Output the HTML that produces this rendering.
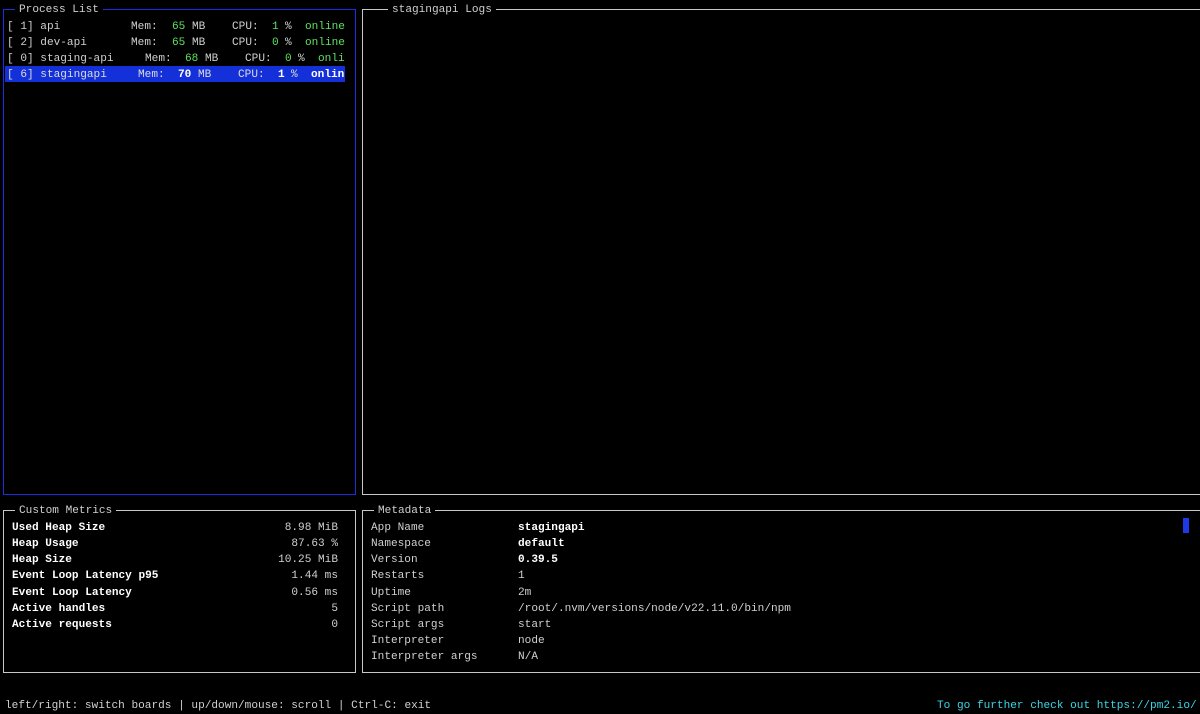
<!DOCTYPE html>
<html><head><meta charset="utf-8"><style>
html,body{margin:0;padding:0;background:#000;width:1200px;height:714px;overflow:hidden;position:relative;font-family:"Liberation Mono",monospace;font-size:11.1px;color:#d0d0d0}
.t{position:absolute;white-space:pre;line-height:16px;height:16px;margin-top:2px}
.box{position:absolute;border:1px solid #c8c8c8;box-sizing:border-box}
.blue{border-color:#1c2fe0}
.ttl{position:absolute;background:#000;padding:0 4px;line-height:14px;color:#d0d0d0;white-space:pre;margin-top:2px}
.g{color:#5fe05f}.w{color:#fff;font-weight:bold}.c{color:#3ad6e6}
.r{text-align:right}
</style></head><body>
<div class="box blue" style="left:3px;top:9px;width:353px;height:486px"></div>
<div class="ttl" style="left:15px;top:1px">Process List</div>
<div class="box" style="left:362px;top:9px;width:840px;height:486px"></div>
<div class="ttl" style="left:388px;top:1px">stagingapi Logs</div>
<div class="box" style="left:3px;top:510px;width:353px;height:163px"></div>
<div class="ttl" style="left:15px;top:502px">Custom Metrics</div>
<div class="box" style="left:362px;top:510px;width:840px;height:163px"></div>
<div class="ttl" style="left:374px;top:502px">Metadata</div>

<div style="position:absolute;left:5px;top:66px;width:340px;height:16px;background:#1430d8"></div>

<div class="t" style="left:7px;top:17px">[ 1] api</div>
<div class="t" style="left:131px;top:17px">Mem:</div><div class="t g" style="left:172px;top:17px">65</div><div class="t" style="left:192px;top:17px">MB</div>
<div class="t" style="left:232px;top:17px">CPU:</div><div class="t g" style="left:272px;top:17px">1</div><div class="t" style="left:285px;top:17px">%</div><div class="t g" style="left:305px;top:17px">online</div>

<div class="t" style="left:7px;top:33px">[ 2] dev-api</div>
<div class="t" style="left:131px;top:33px">Mem:</div><div class="t g" style="left:172px;top:33px">65</div><div class="t" style="left:192px;top:33px">MB</div>
<div class="t" style="left:232px;top:33px">CPU:</div><div class="t g" style="left:272px;top:33px">0</div><div class="t" style="left:285px;top:33px">%</div><div class="t g" style="left:305px;top:33px">online</div>

<div class="t" style="left:7px;top:49px">[ 0] staging-api</div>
<div class="t" style="left:145px;top:49px">Mem:</div><div class="t g" style="left:185px;top:49px">68</div><div class="t" style="left:205px;top:49px">MB</div>
<div class="t" style="left:245px;top:49px">CPU:</div><div class="t g" style="left:285px;top:49px">0</div><div class="t" style="left:298px;top:49px">%</div><div class="t g" style="left:318px;top:49px">onli</div>

<div class="t" style="left:7px;top:65px;color:#ddd">[ 6] stagingapi</div>
<div class="t" style="left:138px;top:65px;color:#ddd">Mem:</div><div class="t w" style="left:178px;top:65px">70</div><div class="t" style="left:198px;top:65px;color:#ddd">MB</div>
<div class="t" style="left:238px;top:65px;color:#ddd">CPU:</div><div class="t w" style="left:278px;top:65px">1</div><div class="t" style="left:291px;top:65px;color:#ddd">%</div><div class="t w" style="left:311px;top:65px">onlin</div>

<div class="t w" style="left:12px;top:518px">Used Heap Size</div><div class="t r" style="left:200px;width:138px;top:518px">8.98 MiB</div>
<div class="t w" style="left:12px;top:534px">Heap Usage</div><div class="t r" style="left:200px;width:138px;top:534px">87.63 %</div>
<div class="t w" style="left:12px;top:550px">Heap Size</div><div class="t r" style="left:200px;width:138px;top:550px">10.25 MiB</div>
<div class="t w" style="left:12px;top:566px">Event Loop Latency p95</div><div class="t r" style="left:200px;width:138px;top:566px">1.44 ms</div>
<div class="t w" style="left:12px;top:583px">Event Loop Latency</div><div class="t r" style="left:200px;width:138px;top:583px">0.56 ms</div>
<div class="t w" style="left:12px;top:599px">Active handles</div><div class="t r" style="left:200px;width:138px;top:599px">5</div>
<div class="t w" style="left:12px;top:615px">Active requests</div><div class="t r" style="left:200px;width:138px;top:615px">0</div>

<div class="t" style="left:371px;top:518px">App Name</div><div class="t w" style="left:518px;top:518px">stagingapi</div>
<div class="t" style="left:371px;top:534px">Namespace</div><div class="t w" style="left:518px;top:534px">default</div>
<div class="t" style="left:371px;top:550px">Version</div><div class="t w" style="left:518px;top:550px">0.39.5</div>
<div class="t" style="left:371px;top:566px">Restarts</div><div class="t" style="left:518px;top:566px">1</div>
<div class="t" style="left:371px;top:583px">Uptime</div><div class="t" style="left:518px;top:583px">2m</div>
<div class="t" style="left:371px;top:599px">Script path</div><div class="t" style="left:518px;top:599px">/root/.nvm/versions/node/v22.11.0/bin/npm</div>
<div class="t" style="left:371px;top:615px">Script args</div><div class="t" style="left:518px;top:615px">start</div>
<div class="t" style="left:371px;top:631px">Interpreter</div><div class="t" style="left:518px;top:631px">node</div>
<div class="t" style="left:371px;top:647px">Interpreter args</div><div class="t" style="left:518px;top:647px">N/A</div>

<div style="position:absolute;left:1183px;top:518px;width:6px;height:15px;background:#1c3ae8"></div>

<div class="t" style="left:5px;top:696px">left/right: switch boards | up/down/mouse: scroll | Ctrl-C: exit</div>
<div class="t c" style="left:937px;top:696px">To go further check out https://pm2.io/</div>
</body></html>
